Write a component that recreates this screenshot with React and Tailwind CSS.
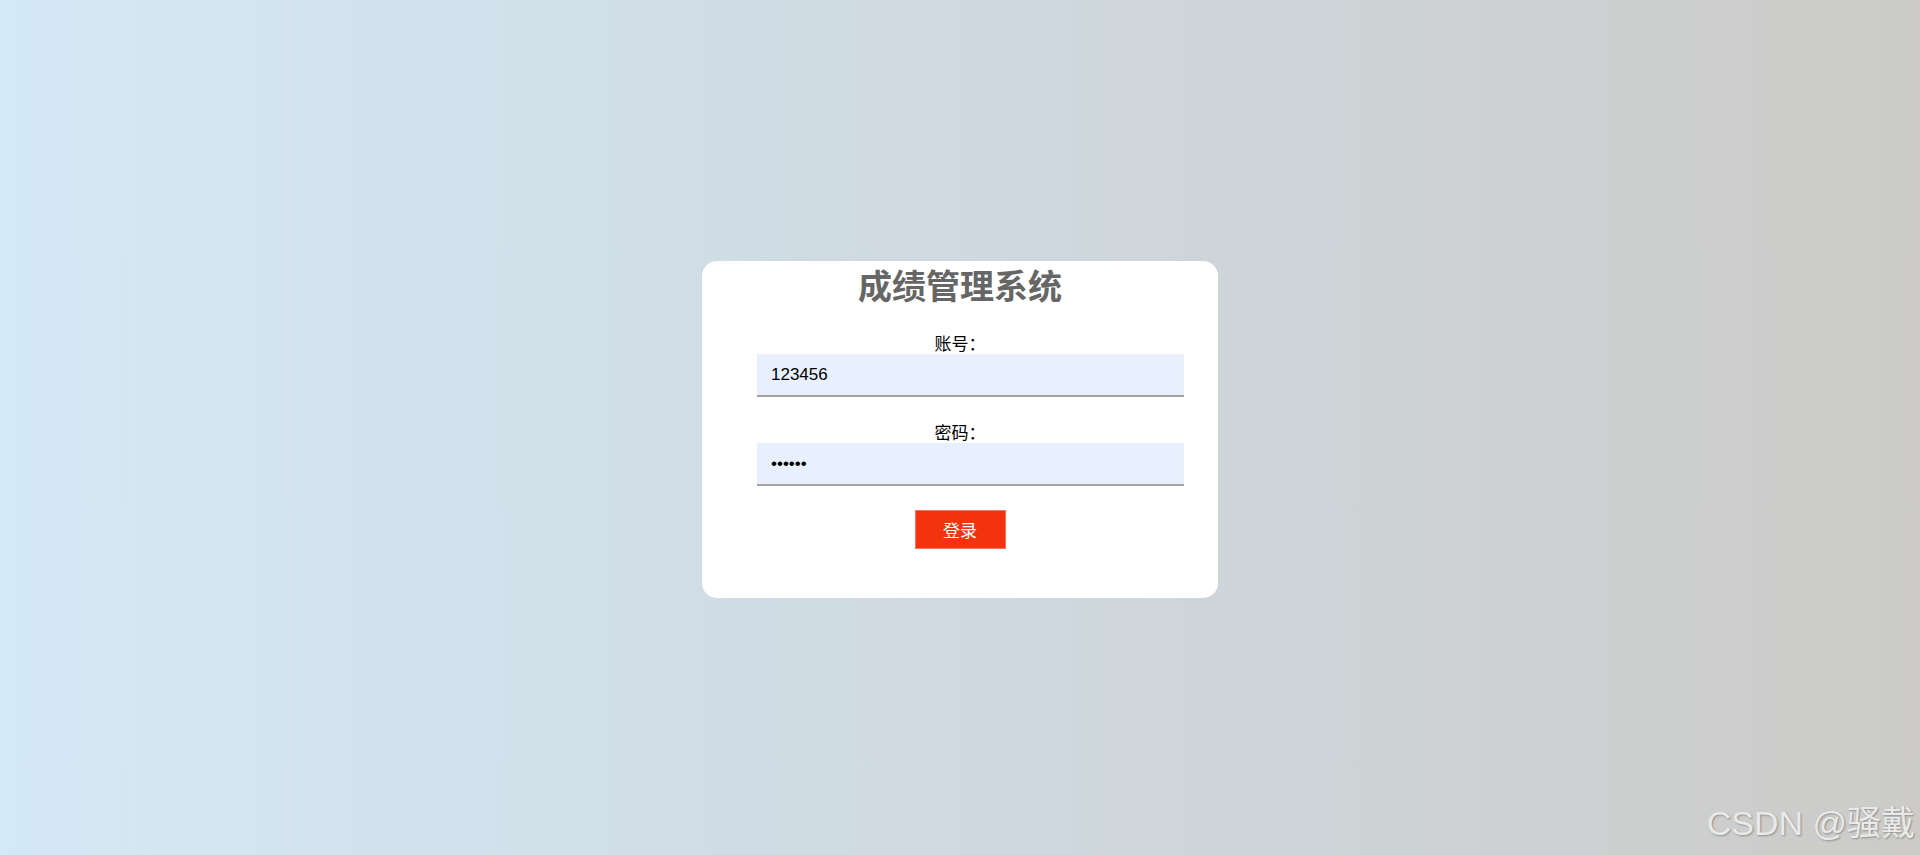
// 登录页:渐变背景 + 居中白色卡片(标题、账号、密码、登录按钮)

export default function App() {
  return (
    <div className="relative w-full h-[855px] overflow-hidden bg-gradient-to-r from-[#d4e9f6] via-[#cfd9e0] to-[#cccbc8] font-['Liberation_Sans','Noto_Sans_CJK_SC',sans-serif]">
      <div className="flex justify-center pt-[261px]">
        <LoginCard />
      </div>
      <span className="absolute right-[5px] bottom-[12px] text-[34px] leading-[40px] text-[#e9e9e9] [text-shadow:1px_1px_2px_rgba(0,0,0,0.3)] whitespace-nowrap">
        CSDN @骚戴
      </span>
    </div>
  );
}

function LoginCard() {
  return (
    <div className="w-[516px] h-[337px] bg-white rounded-[15px] pt-[4px] flex flex-col">
      <h1 className="text-center text-[34px] leading-[40px] font-bold text-[#666666] font-['Noto_Sans_CJK_SC',sans-serif]">
        成绩管理系统
      </h1>
      <Field label="账号：" type="text" value="123456" className="mt-[28px]" />
      <Field label="密码：" type="password" value="123456" className="mt-[25px]" />
      <div className="flex justify-center mt-[24px]">
        <button
          type="button"
          className="w-[91px] h-[39px] bg-[#f2330d] border border-[#f7725a] text-white text-[17px] font-['Noto_Sans_CJK_SC',sans-serif]"
        >
          登录
        </button>
      </div>
    </div>
  );
}

function Field({ label, type, value, className }) {
  return (
    <div className={className}>
      <div className="text-center text-[17px] leading-[20px] text-black font-['Noto_Sans_CJK_SC',sans-serif]">
        {label}
      </div>
      <input
        type={type}
        defaultValue={value}
        readOnly
        className="block mt-[1px] ml-[55px] w-[427px] h-[43px] pl-[14px] bg-[#e8f0fe] border-0 border-b-2 border-[#a3a3a3] outline-none text-[17px] text-black font-['Liberation_Sans',sans-serif]"
      />
    </div>
  );
}
